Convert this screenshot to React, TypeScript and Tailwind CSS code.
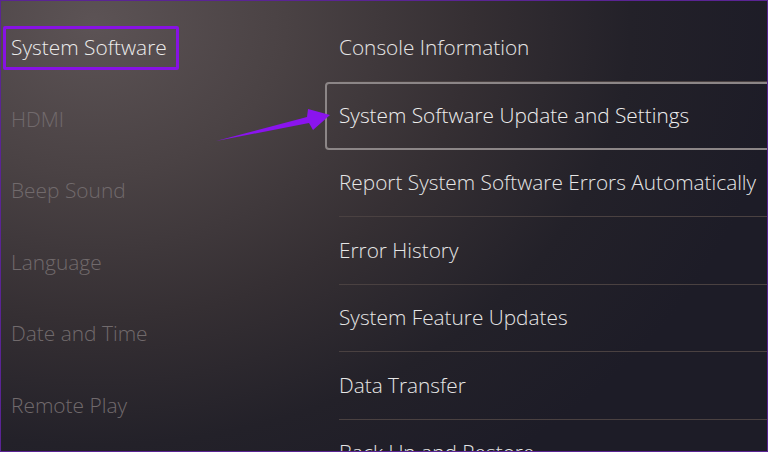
const leftItems = ["System Software", "HDMI", "Beep Sound", "Language", "Date and Time", "Remote Play"];

const rightItems = [
  "Console Information",
  "System Software Update and Settings",
  "Report System Software Errors Automatically",
  "Error History",
  "System Feature Updates",
  "Data Transfer",
  "Back Up and Restore",
];

export default function App() {
  return (
    <div className="relative h-[452px] w-[768px] overflow-hidden border border-[#5a2494] bg-[radial-gradient(ellipse_90%_120%_at_12%_5%,#5c5355_0%,#4a4244_28%,#352f33_55%,#232129_78%,#1d1c27_100%)] font-['Open_Sans',sans-serif] font-light">
      <div className="flex h-full">
        {/* left menu */}
        <div className="flex w-[324px] shrink-0 flex-col pt-[11px]">
          {leftItems.map((item, i) => (
            <div key={item} className="flex h-[71.6px] shrink-0 items-center">
              {i === 0 ? (
                <div className="ml-[2px] flex h-[44px] items-center rounded-[2px] border-[3px] border-[#8712e4] pl-[5px] pr-[9px] text-[20.9px] text-[#ececec]">
                  {item}
                </div>
              ) : (
                <div className="pl-[10px] text-[20.9px] text-[#716a6c]">{item}</div>
              )}
            </div>
          ))}
        </div>

        {/* right list */}
        <div className="flex flex-1 flex-col pt-[13px]">
          {rightItems.map((item, i) => (
            <div
              key={item}
              className={
                i === 1
                  ? "-mr-4 flex h-[68px] shrink-0 items-center rounded-[4px] border-2 border-[#8c8687] pl-[12px] text-[20.8px] text-[#eeeeee]"
                  : "ml-[14px] flex h-[67.5px] shrink-0 items-center border-b border-[#4a4141] text-[20.8px] text-[#e6e6e6]"
              }
            >
              {item}
            </div>
          ))}
        </div>
      </div>

      {/* annotation arrow */}
      <svg className="absolute left-0 top-0" width="768" height="452" viewBox="0 0 768 452">
        <polygon points="215,140 306,116 307,108 329,114 312,129 308,122" fill="#8a14ee" />
      </svg>
    </div>
  );
}
